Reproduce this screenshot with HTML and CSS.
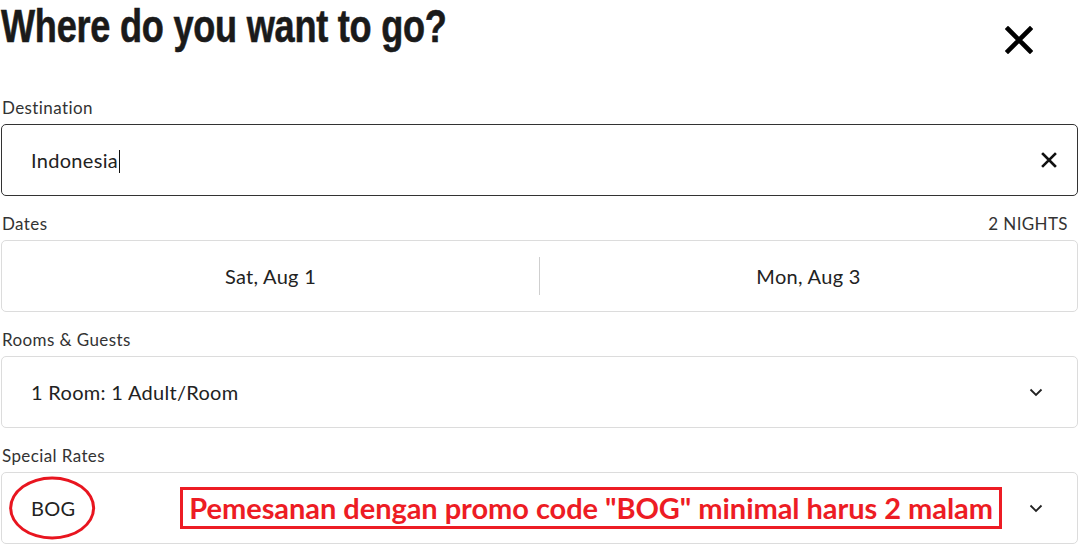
FILE: index.html
```html
<!DOCTYPE html>
<html lang="en">
<head>
<meta charset="utf-8">
<title>Where do you want to go?</title>
<link rel="stylesheet" href="styles.css">
</head>
<body>
<div class="panel">
  <div class="header">
    <h1 class="title">Where do you want to go?</h1>
    <button class="close" aria-label="Close">
      <svg width="28" height="28" viewBox="0 0 28 28"><path d="M3 3 L25 25 M25 3 L3 25" stroke="#000" stroke-width="4.6" stroke-linecap="square" fill="none"/></svg>
    </button>
  </div>

  <div class="field">
    <div class="label-row"><span class="label">Destination</span></div>
    <div class="box box-active">
      <span class="value">Indonesia<span class="caret"></span></span>
      <svg class="clear" width="16" height="16" viewBox="0 0 16 16"><path d="M2 2 L14 14 M14 2 L2 14" stroke="#111" stroke-width="2.6" stroke-linecap="square" fill="none"/></svg>
    </div>
  </div>

  <div class="field">
    <div class="label-row"><span class="label">Dates</span><span class="label nights">2 NIGHTS</span></div>
    <div class="box box-dates">
      <span class="date">Sat, Aug 1</span>
      <span class="divider"></span>
      <span class="date">Mon, Aug 3</span>
    </div>
  </div>

  <div class="field">
    <div class="label-row"><span class="label">Rooms &amp; Guests</span></div>
    <div class="box">
      <span class="value">1 Room: 1 Adult/Room</span>
      <svg class="chevron" width="14" height="9" viewBox="0 0 14 9"><path d="M1.5 1.5 L7 7 L12.5 1.5" stroke="#222" stroke-width="1.8" fill="none"/></svg>
    </div>
  </div>

  <div class="field">
    <div class="label-row"><span class="label">Special Rates</span></div>
    <div class="box box-special">
      <span class="value promo">BOG<span class="circle"></span></span>
      <span class="note">Pemesanan dengan promo code "BOG" minimal harus 2 malam</span>
      <svg class="chevron-end" width="14" height="9" viewBox="0 0 14 9"><path d="M1.5 1.5 L7 7 L12.5 1.5" stroke="#222" stroke-width="1.8" fill="none"/></svg>
    </div>
  </div>
</div>
</body>
</html>
```

FILE: styles.css
```css
* { box-sizing: border-box; }
html, body { margin: 0; padding: 0; background: #fff; }
body { font-family: Lato, "Open Sans", Arial, sans-serif; color: #222; width: 1080px; height: 547px; overflow: hidden; }

.panel { padding: 0 2px 0 1px; }

.header { display: flex; justify-content: space-between; align-items: flex-start; height: 97px; }
.title {
  margin: 0;
  font-family: "Liberation Sans", Arial, sans-serif;
  font-weight: 700;
  font-size: 46px;
  line-height: 52px;
  color: #1a1a1a;
  white-space: nowrap;
  transform: scaleX(0.785);
  transform-origin: 0 0;
  letter-spacing: -0.3px;
  -webkit-text-stroke: 0.6px #1a1a1a;
}
.close { border: 0; background: none; padding: 0; margin: 26px 45px 0 0; width: 28px; height: 28px; display: flex; }

.field { margin-bottom: 17px; }
.label-row { display: flex; justify-content: space-between; align-items: center; height: 20px; margin-bottom: 7px; padding-left: 1px; }
.label { font-size: 17px; color: #333; letter-spacing: 0.4px; }
.nights { margin-right: 10px; }

.box {
  height: 72px;
  border: 1px solid #dcdcdc;
  border-radius: 5px;
  display: flex;
  align-items: center;
  padding: 0 34px 0 29px;
}
.box-active { border: 1.5px solid #333; padding-right: 20px; }
.value { font-size: 20px; color: #222; letter-spacing: 0.3px; position: relative; }
.caret { display: inline-block; width: 1.5px; height: 23px; background: #111; vertical-align: -5px; margin-left: 1px; }
.clear { margin-left: auto; }
.chevron { margin-left: auto; }

.box-dates { padding: 0; }
.date { flex: 1; text-align: center; font-size: 20px; color: #222; letter-spacing: 0.3px; }
.divider { width: 1px; height: 38px; background: #cfcfcf; }

.box-special { padding-right: 34px; }
.promo { position: relative; }
.circle {
  position: absolute;
  left: 50%;
  top: 50%;
  width: 86px;
  height: 63px;
  transform: translate(-51%, -50%);
  border: 3px solid #e8151f;
  border-radius: 50%;
}
.note {
  margin-left: auto;
  margin-right: 27px;
  border: 3.5px solid #ed1c24;
  color: #ed1c24;
  font-family: Lato, "Open Sans", sans-serif;
  font-weight: 700;
  font-size: 29px;
  line-height: 34px;
  padding: 1px 6px;
  white-space: nowrap;
  letter-spacing: -0.05px;
}
.chevron-end { flex: none; }
```
